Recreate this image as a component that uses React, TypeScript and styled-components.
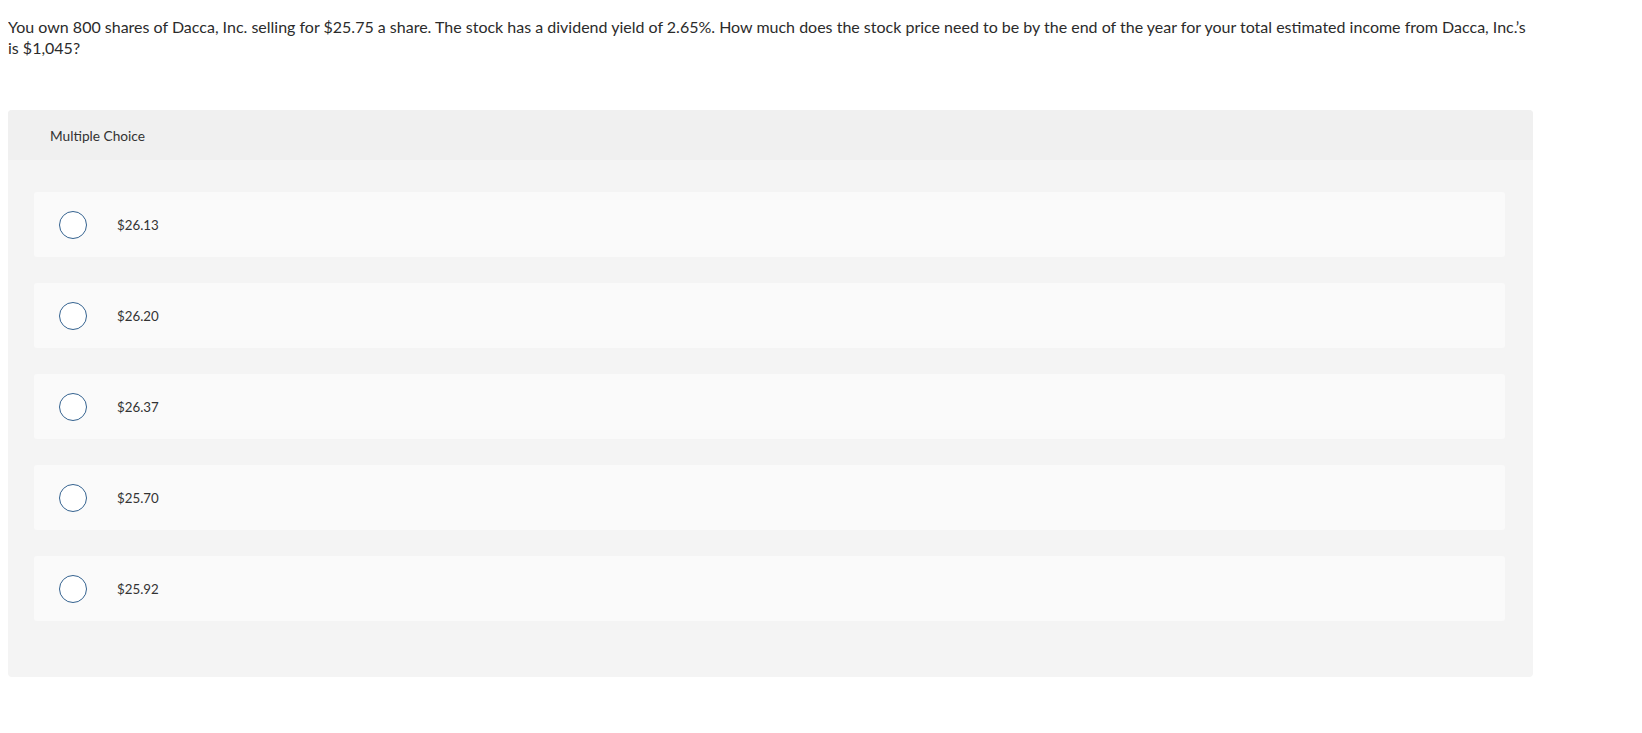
import React from "react";
import styled, { createGlobalStyle } from "styled-components";

const choices = ["$26.13", "$26.20", "$26.37", "$25.70", "$25.92"];

const App = () => (
  <>
    <GlobalStyle />
    <Page>
      <Question>
        You own 800 shares of Dacca, Inc. selling for $25.75 a share. The stock
        has a dividend yield of 2.65%. How much does the stock price need to be
        by the end of the year for your total estimated income from Dacca,
        Inc.’s is $1,045?
      </Question>
      <Panel>
        <PanelHeader>Multiple Choice</PanelHeader>
        <ChoiceList>
          {choices.map(c => (
            <Choice key={c}>
              <Radio />
              <ChoiceLabel>{c}</ChoiceLabel>
            </Choice>
          ))}
        </ChoiceList>
      </Panel>
    </Page>
  </>
);

// Styles

const GlobalStyle = createGlobalStyle`
  body {
    margin: 8px;
    background: #fff;
    color: #333;
    font-family: Lato, "Liberation Sans", sans-serif;
  }
`;

const Page = styled.div`
  width: 1528px;
`;

const Question = styled.div`
  padding-top: 8px;
  font-size: 16px;
  line-height: 21px;
  color: #2b2b2b;
`;

const Panel = styled.div`
  width: 1525px;
  margin-top: 52px;
  background: #f4f4f4;
  border-radius: 4px;
  overflow: hidden;
`;

const PanelHeader = styled.div`
  height: 50px;
  display: flex;
  align-items: center;
  padding-left: 42px;
  background: #f0f0f0;
  font-size: 13.7px;
  color: #333;
`;

const ChoiceList = styled.div`
  display: flex;
  flex-direction: column;
  gap: 26px;
  padding: 32px 28px 56px 26px;
`;

const Choice = styled.div`
  height: 65px;
  display: flex;
  align-items: center;
  padding-left: 25px;
  background: #fafafa;
  border-radius: 3px;
`;

const Radio = styled.span`
  box-sizing: border-box;
  width: 28px;
  height: 28px;
  border-radius: 50%;
  border: 1.5px solid #34628f;
  background: #fff;
  flex: 0 0 auto;
`;

const ChoiceLabel = styled.span`
  margin-left: 30px;
  font-size: 13.3px;
  color: #333;
`;

// Export

export default App;
